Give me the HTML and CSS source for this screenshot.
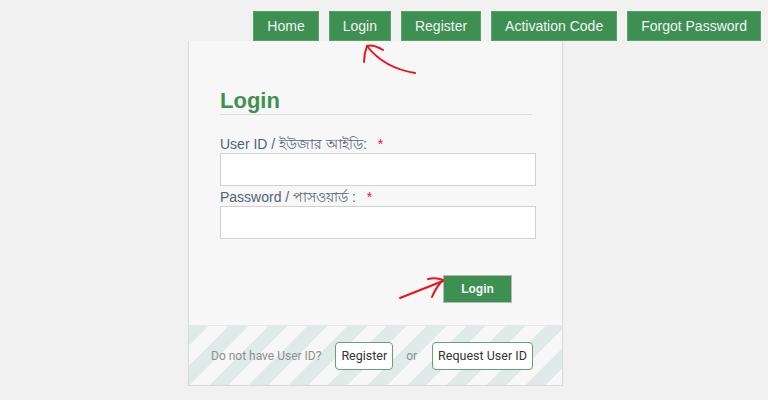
FILE: index.html
```html
<!DOCTYPE html>
<html lang="en">
<head>
    <meta charset="UTF-8">
    <meta name="viewport" content="width=device-width, initial-scale=1.0">
    <title>Login</title>
    <link rel="stylesheet" href="styles.css">
</head>
<body>
    <div class="nav">
        <a class="nav-btn" href="#">Home</a>
        <a class="nav-btn" href="#">Login</a>
        <a class="nav-btn" href="#">Register</a>
        <a class="nav-btn" href="#">Activation Code</a>
        <a class="nav-btn" href="#">Forgot Password</a>
    </div>

    <div class="login-box">
        <div class="login-main">
            <h2 class="login-title">Login</h2>
            <label class="field-label">User ID / ইউজার আইডি: <span class="req">*</span></label>
            <input class="field-input" type="text">
            <label class="field-label">Password / পাসওয়ার্ড : <span class="req">*</span></label>
            <input class="field-input" type="password">
            <div class="submit-row">
                <button class="submit-btn">Login</button>
            </div>
        </div>
        <div class="login-footer">
            <span class="footer-text">Do not have User ID?</span>
            <a class="outline-btn" href="#">Register</a>
            <span class="footer-or">or</span>
            <a class="outline-btn" href="#">Request User ID</a>
        </div>
    </div>

    <!-- hand drawn arrows -->
    <svg class="marks" width="768" height="400" viewBox="0 0 768 400" fill="none" stroke="#e8141a" stroke-width="2" stroke-linecap="round" stroke-linejoin="round">
        <path d="M367 46Q384 68 415 73"></path>
        <path d="M383 50Q373 44 367 46Q364 54 364 62"></path>
        <path d="M400 298Q420 290 443 281"></path>
        <path d="M428 279Q436 277 443 280Q436 287 432 297"></path>
    </svg>
</body>
</html>
```

FILE: styles.css
```css
body {
    margin: 0;
    background: #f1f1f1;
    font-family: "Liberation Sans", Arial, sans-serif;
    position: relative;
    width: 768px;
    height: 400px;
    overflow: hidden;
}
.nav {
    display: flex;
    justify-content: flex-end;
    gap: 10px;
    padding: 11px 7px 0 0;
}
.nav-btn {
    display: flex;
    align-items: center;
    height: 30px;
    box-sizing: border-box;
    padding: 0 13px;
    background: #3d8f52;
    border: 1px solid #5aa06b;
    color: #f4f4f4;
    font-size: 14px;
    text-decoration: none;
}
.login-box {
    margin-left: 188px;
    width: 375px;
    box-sizing: border-box;
    background: #f7f7f7;
    border: 1px solid #d8d8d8;
    border-top: none;
}
.login-main {
    padding: 47px 26px 22px 31px;
}
.login-title {
    margin: 0 4px 0 0;
    font-size: 22px;
    line-height: 26px;
    font-weight: bold;
    color: #3f9152;
    border-bottom: 1px solid #dcdcdc;
}
.field-label {
    display: block;
    margin-top: 21px;
    font-size: 14px;
    line-height: 17px;
    color: #536276;
}
.field-input + .field-label {
    margin-top: 3px;
}
.req {
    color: #e8141a;
    margin-left: 7px;
}
.field-input {
    display: block;
    width: 100%;
    height: 33px;
    box-sizing: border-box;
    margin: 0;
    border: 1px solid #cfcfcf;
    background: #fff;
    outline: none;
}
.submit-row {
    display: flex;
    justify-content: flex-end;
    padding-right: 24px;
    margin-top: 36px;
}
.submit-btn {
    width: 69px;
    height: 28px;
    background: #3d8f52;
    border: 1px solid #b8b8b8;
    color: #f4f4f4;
    font-family: "Liberation Sans", Arial, sans-serif;
    font-size: 12px;
    font-weight: bold;
}
.login-footer {
    display: flex;
    align-items: center;
    height: 59px;
    padding-left: 22px;
    border-top: 1px solid #e6e6e6;
    background: repeating-linear-gradient(135deg, #e0eae9 0 14px, #f7f7f7 14px 28px);
    font-family: Roboto, sans-serif;
}
.footer-text {
    font-size: 12px;
    color: #8e8e8e;
    margin-right: 14px;
}
.footer-or {
    font-size: 12px;
    color: #8e8e8e;
    margin: 0 15px 0 13px;
}
.outline-btn {
    display: flex;
    align-items: center;
    height: 28px;
    box-sizing: border-box;
    padding: 0 5px;
    background: #fff;
    border: 1px solid #5ca56f;
    border-radius: 4px;
    color: #333;
    font-size: 12.5px;
    text-decoration: none;
}
.marks {
    position: absolute;
    top: 0;
    left: 0;
    pointer-events: none;
}
```
